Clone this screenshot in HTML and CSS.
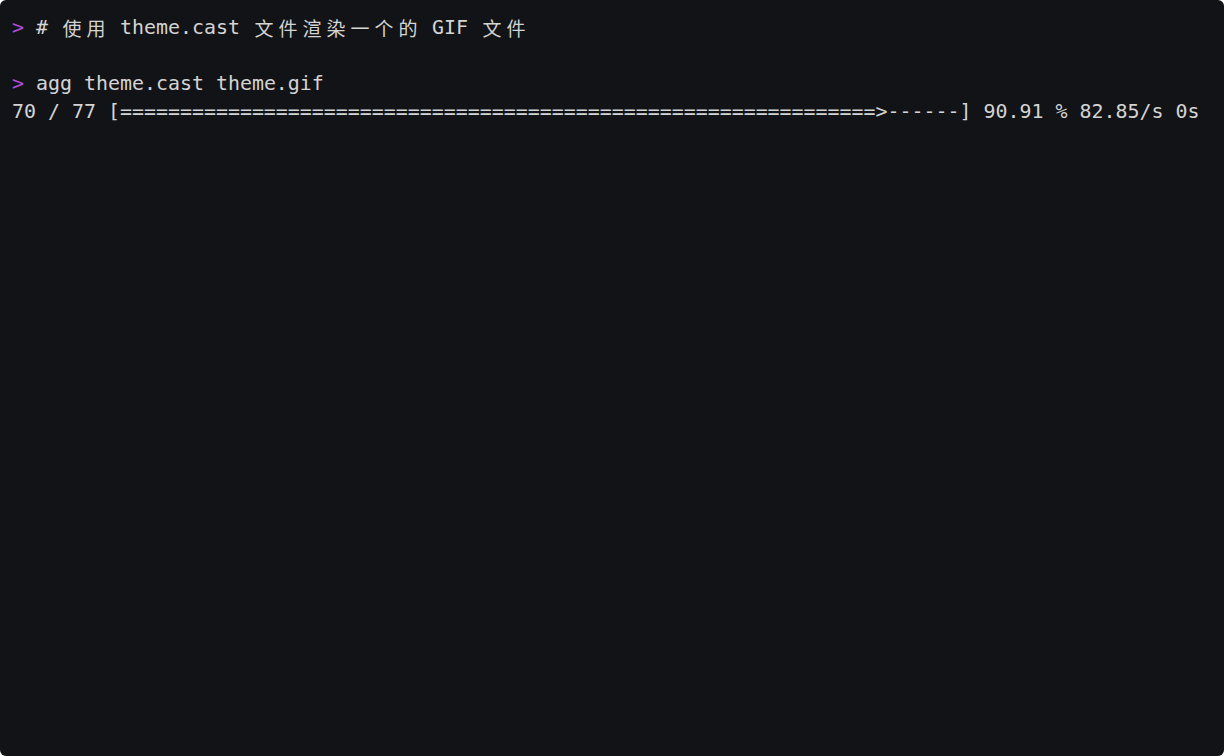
FILE: index.html
```html
<!DOCTYPE html>
<html lang="zh">
<head>
<meta charset="utf-8">
<title>agg</title>
<link rel="stylesheet" href="styles.css">
</head>
<body>
<div class="term">
<div class="line"><span class="prompt">&gt;</span> # <span class="w">使</span><span class="w">用</span> theme.cast <span class="w">文</span><span class="w">件</span><span class="w">渲</span><span class="w">染</span><span class="w">一</span><span class="w">个</span><span class="w">的</span> GIF <span class="w">文</span><span class="w">件</span></div>
<div class="line"> </div>
<div class="line"><span class="prompt">&gt;</span> agg theme.cast theme.gif</div>
<div class="line">70 / 77 [===============================================================&gt;------] 90.91 % 82.85/s 0s</div>
</div>
</body>
</html>
```
FILE: styles.css
```css
html, body {
  margin: 0;
  padding: 0;
  background: #ffffff;
}
.term {
  width: 1224px;
  height: 756px;
  box-sizing: border-box;
  background: #121316;
  border-radius: 6px;
  padding: 14px 12px;
  color: #d4d4d4;
  font-family: "DejaVu Sans Mono", "Noto Sans CJK SC", monospace;
  font-size: 19.93px;
  overflow: hidden;
}
.line {
  height: 28px;
  line-height: 28px;
  white-space: pre;
}
.prompt {
  color: #b04fd6;
}
.w {
  display: inline-block;
  width: 24px;
  text-align: center;
  font-family: "Noto Sans CJK SC", sans-serif;
  font-size: 19px;
  line-height: 28px;
  vertical-align: top;
}
```
